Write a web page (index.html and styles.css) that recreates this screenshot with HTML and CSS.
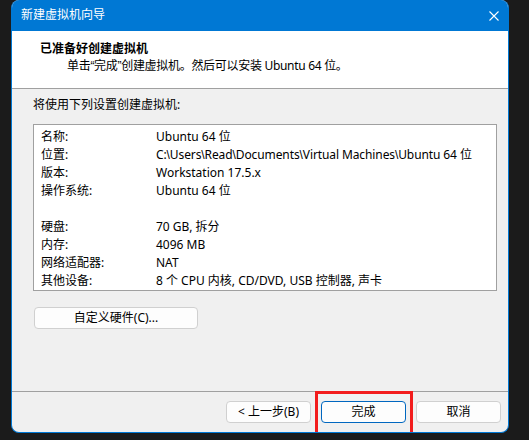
FILE: index.html
```html
<!DOCTYPE html>
<html lang="zh-CN">
<head>
<meta charset="utf-8">
<title>新建虚拟机向导</title>
<link rel="stylesheet" href="styles.css">
</head>
<body>
<div class="window">
  <div class="titlebar">
    <span class="title">新建虚拟机向导</span>
    <svg class="close" width="10" height="10" viewBox="0 0 10 10">
      <path d="M0.5 0.5 L9.5 9.5 M9.5 0.5 L0.5 9.5" stroke="#fff" stroke-width="1.1" fill="none"/>
    </svg>
  </div>
  <div class="header">
    <div class="h-title">已准备好创建虚拟机</div>
    <div class="h-sub">单击<span class="q">“</span>完成<span class="q">”</span>创建虚拟机。然后可以安装 Ubuntu 64 位。</div>
  </div>
  <div class="content">
    <div class="intro">将使用下列设置创建虚拟机:</div>
    <div class="summary">
      <div class="row"><span class="key">名称:</span><span class="val">Ubuntu 64 位</span></div>
      <div class="row"><span class="key">位置:</span><span class="val path">C:<span class="bs">\</span>Users<span class="bs">\</span>Read<span class="bs">\</span>Documents<span class="bs">\</span>Virtual Machines<span class="bs">\</span>Ubuntu 64 位</span></div>
      <div class="row"><span class="key">版本:</span><span class="val">Workstation 17.5.x</span></div>
      <div class="row"><span class="key">操作系统:</span><span class="val">Ubuntu 64 位</span></div>
      <div class="row"></div>
      <div class="row"><span class="key">硬盘:</span><span class="val">70 GB, 拆分</span></div>
      <div class="row"><span class="key">内存:</span><span class="val">4096 MB</span></div>
      <div class="row"><span class="key">网络适配器:</span><span class="val">NAT</span></div>
      <div class="row"><span class="key">其他设备:</span><span class="val">8 个 CPU 内核, CD/DVD, USB 控制器, 声卡</span></div>
    </div>
    <button class="btn custom">自定义硬件(C)...</button>
  </div>
  <div class="footer">
    <button class="btn nav">&lt; 上一步(B)</button>
    <div class="finish-wrap">
      <button class="btn nav primary">完成</button>
      <span class="highlight"></span>
    </div>
    <button class="btn nav">取消</button>
  </div>
</div>
</body>
</html>
```
FILE: styles.css
```css
* {
  box-sizing: border-box;
}

html, body {
  margin: 0;
  padding: 0;
  background: #1b1b1b;
}

body {
  font-family: "Noto Sans", "Noto Sans CJK SC", sans-serif;
  font-size: 12px;
  color: #000;
}

.window {
  margin-left: 11px;
  width: 498px;
  height: 433px;
  border: 1px solid #0078d4;
  border-top: none;
  border-radius: 8px;
  background: #f0f0f0;
  display: flex;
  flex-direction: column;
  overflow: hidden;
}

.titlebar {
  height: 31px;
  flex: none;
  background: #0078d4;
  color: #fff;
  display: flex;
  align-items: center;
  justify-content: space-between;
  margin: 0 -1px;
  padding: 0 9px 1px 10px;
}

.title {
  line-height: 16px;
}

.close {
  display: block;
  margin-right: 1px;
  margin-top: 1px;
}

.header {
  height: 58px;
  flex: none;
  background: #fff;
  border-bottom: 1px solid #a0a0a0;
  padding: 9px 0 0 28px;
}

.h-title {
  font-weight: bold;
  line-height: 17px;
}

.h-sub {
  line-height: 17px;
  padding-left: 27px;
  letter-spacing: -0.3px;
}

/* narrow Latin quotes and path separators */
.q,
.bs {
  font-family: "Liberation Sans", sans-serif;
}

.content {
  flex: 1;
  padding: 7px 11px 0 21px;
}

.intro {
  line-height: 18px;
}

.summary {
  margin-top: 10px;
  height: 167px;
  border: 1px solid #a0a0a0;
  background: #fff;
  padding: 3px 0 0 7px;
}

.row {
  display: flex;
  height: 18px;
  line-height: 18px;
  white-space: nowrap;
}

.key {
  width: 115px;
  flex: none;
}

.path {
  letter-spacing: -0.1px;
}

.btn {
  font: inherit;
  color: #000;
  background: #fdfdfd;
  border: 1px solid #d0d0d0;
  border-radius: 4px;
  height: 22px;
  padding: 0;
  line-height: 18px;
  display: block;
}

.custom {
  margin-top: 16px;
  margin-left: 1px;
  width: 164px;
}

.footer {
  flex: none;
  height: 41px;
  border-top: 1px solid #a0a0a0;
  display: flex;
  justify-content: flex-end;
  gap: 10px;
  padding: 9px 7px 0 0;
}

.nav {
  width: 85px;
}

.finish-wrap {
  position: relative;
}

.primary {
  border-color: #0067c0;
}

.highlight {
  position: absolute;
  left: -6px;
  right: -7px;
  top: -10px;
  bottom: -8px;
  border: 3px solid #f21c1c;
  pointer-events: none;
}
```
